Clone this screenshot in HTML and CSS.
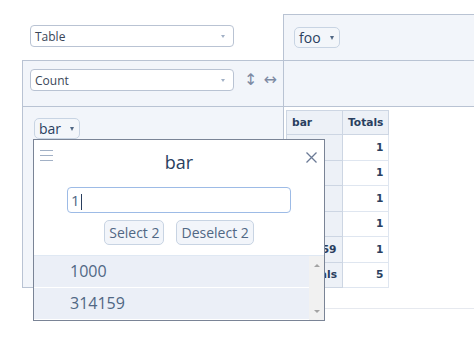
FILE: index.html
```html
<!DOCTYPE html>
<html lang="en">

<head>
	<meta charset="UTF-8">
	<meta name="viewport" content="width=device-width, initial-scale=1.0">
	<title>Pivot Table</title>
	<link rel="stylesheet" href="styles.css">
</head>

<body>
	<div class="pvt-ui">
		<!-- Renderer -->
		<div class="renderers">
			<div class="dropdown">
				<span>Table</span>
				<span class="dropdown-icon"></span>
			</div>
		</div>

		<!-- Unused attributes -->
		<div class="axis unused">
			<span class="attr">foo<span class="triangle"></span></span>
		</div>

		<!-- Aggregator -->
		<div class="axis vals">
			<div class="vals-row">
				<div class="dropdown">
					<span>Count</span>
					<span class="dropdown-icon"></span>
				</div>
				<span class="order row-order">↕</span>
				<span class="order col-order">↔</span>
			</div>
		</div>

		<!-- Columns -->
		<div class="axis cols"></div>

		<!-- Rows -->
		<div class="axis rows">
			<span class="attr">bar<span class="triangle"></span></span>

			<div class="filter-box">
				<svg class="drag-handle" width="13" height="11" viewBox="0 0 13 11">
					<path d="M0 0.5H13M0 5.5H13M0 10.5H13" stroke="#a2b1c6" stroke-width="1.2" fill="none" />
				</svg>
				<svg class="close-x" width="11" height="11" viewBox="0 0 11 11">
					<path d="M0.5 0.5L10.5 10.5M10.5 0.5L0.5 10.5" stroke="#6b7a96" stroke-width="1.3" fill="none" />
				</svg>
				<h4 class="filter-title">bar</h4>
				<div class="search">1<span class="caret"></span></div>
				<div class="button-row">
					<button class="pvt-button">Select 2</button>
					<button class="pvt-button">Deselect 2</button>
				</div>
				<div class="check-container">
					<div class="check-list">
						<p class="selected">1000</p>
						<p class="selected">314159</p>
					</div>
					<div class="scrollbar">
						<span class="scroll-up"></span>
						<span class="scroll-down"></span>
					</div>
				</div>
			</div>
		</div>

		<!-- Output -->
		<div class="output">
			<table class="pvt-table">
				<thead>
					<tr>
						<th class="axis-label">bar</th>
						<th class="total-label">Totals</th>
					</tr>
				</thead>
				<tbody>
					<tr>
						<th class="row-label">2</th>
						<td>1</td>
					</tr>
					<tr>
						<th class="row-label">3</th>
						<td>1</td>
					</tr>
					<tr>
						<th class="row-label">42</th>
						<td>1</td>
					</tr>
					<tr>
						<th class="row-label">1000</th>
						<td>1</td>
					</tr>
					<tr>
						<th class="row-label">314159</th>
						<td>1</td>
					</tr>
					<tr>
						<th class="total-label">Totals</th>
						<td>5</td>
					</tr>
				</tbody>
			</table>
		</div>
	</div>
</body>

</html>
```

FILE: styles.css
```css
html,
body {
	min-height: 100vh;
}

body {
	margin: 0;
	font-family: "Open Sans", sans-serif;
	color: #2a3f5f;
	background: #fff;
}

.pvt-ui {
	display: grid;
	grid-template-columns: 261px 1fr;
	grid-template-rows: 46px 46px auto;
	margin: 14px 0 0 22px;
}

.axis {
	background: #f2f5fa;
	border: 0 solid #b9c3d3;
}

.renderers {
	padding: 11px 0 0 8px;
}

.unused {
	border-top-width: 1px;
	border-left-width: 1px;
	padding: 11px 0 0 10px;
}

.vals {
	border-top-width: 1px;
	border-left-width: 1px;
	padding: 8px 0 0 7px;
}

.cols {
	border-top-width: 1px;
	border-left-width: 1px;
}

.rows {
	position: relative;
	align-self: start;
	height: 182px;
	box-sizing: border-box;
	border-width: 1px 0 1px 1px;
	padding: 10px 0 0 11px;
}

.output {
	border-top: 1px solid #b9c3d3;
	border-left: 1px solid #b9c3d3;
	border-bottom: 1px solid #e6e9ef;
	padding-bottom: 20px;
}

/* Dropdowns */
.dropdown {
	display: flex;
	align-items: center;
	justify-content: space-between;
	width: 204px;
	height: 22px;
	box-sizing: border-box;
	padding: 0 8px 0 4px;
	border: 1px solid #b9c3d3;
	border-radius: 4px;
	background: #fff;
	font-size: 12px;
	color: #3a4658;
}

.dropdown-icon {
	width: 0;
	height: 0;
	border-style: solid;
	border-width: 3px 2px 0;
	border-color: #a2b1c6 transparent transparent;
}

.vals-row {
	display: flex;
	align-items: center;
}

.order {
	font-family: "DejaVu Sans", sans-serif;
	font-size: 16px;
	line-height: 20px;
	color: #7d8aa3;
}

.row-order {
	margin-left: 10px;
}

.col-order {
	margin-left: 6px;
}

/* Attribute pills */
.attr {
	display: inline-flex;
	align-items: center;
	height: 21px;
	box-sizing: border-box;
	padding: 0 5px 0 4px;
	border: 1px solid #c8d4e3;
	border-radius: 5px;
	background: #f3f6fa;
	font-size: 14px;
}

.triangle {
	width: 0;
	height: 0;
	border-style: solid;
	border-width: 4px 2.5px 0;
	border-color: #506784 transparent transparent;
	margin-left: 9px;
}

/* Filter popup */
.filter-box {
	position: absolute;
	left: 10px;
	top: 32px;
	width: 292px;
	height: 182px;
	box-sizing: border-box;
	overflow: hidden;
	border: 1px solid #7a8496;
	background: #fff;
	text-align: center;
	z-index: 10;
}

.drag-handle {
	position: absolute;
	left: 6px;
	top: 10px;
}

.close-x {
	position: absolute;
	right: 7px;
	top: 12px;
}

.filter-title {
	margin: 10px 0 0;
	font-size: 18px;
	line-height: 24px;
	font-weight: 400;
}

.search {
	width: 224px;
	height: 26px;
	box-sizing: border-box;
	margin: 13px auto 0;
	padding: 0 3px;
	border: 1px solid #9dbbe6;
	border-radius: 4px;
	text-align: left;
	font-size: 15px;
	line-height: 24px;
	color: #506784;
}

.caret {
	display: inline-block;
	width: 1px;
	height: 16px;
	margin-left: 1px;
	background: #2a3f5f;
	vertical-align: middle;
}

.button-row {
	display: flex;
	justify-content: center;
	gap: 12px;
	margin-top: 7px;
}

.pvt-button {
	height: 25px;
	box-sizing: border-box;
	padding: 0 4px;
	border: 1px solid #c8d4e3;
	border-radius: 5px;
	background: #f2f5fa;
	color: #506784;
	font: 14px "Open Sans", sans-serif;
}

.check-container {
	display: flex;
	height: 64px;
	margin-top: 10px;
	border-top: 1px solid #dfe8f3;
	text-align: left;
	font-size: 16px;
	color: #506784;
}

.check-list {
	flex: 1;
}

.check-list p {
	margin: 0 0 1px;
	padding: 3px 3px 3px 36px;
	line-height: 25px;
}

.check-list p.selected {
	background: #ebeff7;
}

.scrollbar {
	display: flex;
	flex-direction: column;
	justify-content: space-between;
	align-items: center;
	width: 15px;
	padding: 8px 0 7px;
	box-sizing: border-box;
	background: #f1f1f1;
}

.scroll-up,
.scroll-down {
	width: 0;
	height: 0;
	border-style: solid;
	border-color: transparent;
}

.scroll-up {
	border-width: 0 3px 3px;
	border-bottom-color: #a3a3a3;
}

.scroll-down {
	border-width: 3px 3px 0;
	border-top-color: #a3a3a3;
}

/* Output table */
.pvt-table {
	border-collapse: collapse;
	margin: 3px 0 0 2px;
	font-family: "DejaVu Sans", Verdana, sans-serif;
	font-size: 8pt;
	font-weight: bold;
	color: #2a3f5f;
}

.pvt-table thead tr {
	height: 24px;
}

.pvt-table tbody tr {
	height: 25.5px;
}

.pvt-table th {
	padding: 0 5px;
	border: 1px solid #cdd6e3;
	background: #edf1f7;
	text-align: left;
}

.pvt-table .axis-label {
	width: 45px;
}

.pvt-table .total-label {
	text-align: right;
}

.pvt-table td {
	padding: 0 5px;
	border: 1px solid #dfe6f0;
	background: #fff;
	text-align: right;
}
```
